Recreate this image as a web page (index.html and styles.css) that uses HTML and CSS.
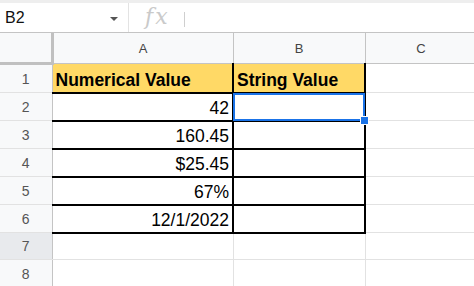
FILE: index.html
```html
<!DOCTYPE html>
<html lang="en">
<head>
    <meta charset="UTF-8">
    <meta name="viewport" content="width=device-width, initial-scale=1.0">
    <title>Sheet</title>
    <link rel="stylesheet" href="styles.css">
</head>
<body>
    <div class="top-strip"></div>
    <div class="formula-bar">
        <div class="name-box">
            <span class="cell-ref">B2</span>
            <span class="caret"></span>
        </div>
        <div class="fx">fx</div>
        <div class="fx-sep"></div>
    </div>

    <table class="sheet">
        <colgroup>
            <col class="col-num">
            <col class="col-a">
            <col class="col-b">
            <col class="col-c">
        </colgroup>
        <tr class="head-row">
            <th class="corner"></th>
            <th>A</th>
            <th>B</th>
            <th>C</th>
        </tr>
        <tr class="row-first">
            <td class="num">1</td>
            <td class="data title">Numerical Value</td>
            <td class="data title">String Value</td>
            <td></td>
        </tr>
        <tr>
            <td class="num">2</td>
            <td class="data val">42</td>
            <td class="data selected"><div class="sel-box"><span class="handle"></span></div></td>
            <td></td>
        </tr>
        <tr>
            <td class="num">3</td>
            <td class="data val">160.45</td>
            <td class="data"></td>
            <td></td>
        </tr>
        <tr>
            <td class="num">4</td>
            <td class="data val">$25.45</td>
            <td class="data"></td>
            <td></td>
        </tr>
        <tr>
            <td class="num">5</td>
            <td class="data val">67%</td>
            <td class="data"></td>
            <td></td>
        </tr>
        <tr>
            <td class="num">6</td>
            <td class="data val">12/1/2022</td>
            <td class="data"></td>
            <td></td>
        </tr>
        <tr class="short">
            <td class="num hover">7</td>
            <td></td>
            <td></td>
            <td></td>
        </tr>
        <tr>
            <td class="num">8</td>
            <td></td>
            <td></td>
            <td></td>
        </tr>
    </table>
</body>
</html>
```

FILE: styles.css
```css
body {
    margin: 0;
    background: #fff;
    font-family: "Liberation Sans", Arial, sans-serif;
    color: #000;
    overflow: hidden;
}
.top-strip {
    height: 3px;
    background: #eeeeee;
}
.formula-bar {
    height: 29px;
    display: flex;
    align-items: center;
    border-bottom: 1px solid #c4c4c4;
}
.name-box {
    width: 129px;
    height: 100%;
    display: flex;
    align-items: center;
    border-right: 1px solid #e3e3e3;
    box-sizing: border-box;
}
.cell-ref {
    font-size: 16px;
    padding-left: 5px;
    flex: 1;
    color: #111;
}
.caret {
    width: 0;
    height: 0;
    border-left: 4px solid transparent;
    border-right: 4px solid transparent;
    border-top: 4px solid #555;
    margin-right: 10px;
    margin-top: 2px;
}
.fx {
    font-family: "DejaVu Serif", "Liberation Serif", serif;
    font-style: italic;
    font-size: 22px;
    color: #cacaca;
    margin-left: 16px;
    width: 39px;
    letter-spacing: 2px;
    margin-top: -3px;
}
.fx-sep {
    width: 1px;
    height: 15px;
    background: #cfcfcf;
    margin-top: 4px;
}
.sheet {
    border-collapse: collapse;
    table-layout: fixed;
    width: 477px;
}
.col-num { width: 52px; }
.col-a { width: 181px; }
.col-b { width: 132px; }
.col-c { width: 112px; }
.sheet th,
.sheet td {
    padding: 0;
    border: 1px solid #e2e2e2;
}
.sheet td:first-child {
    border-left: none;
}
.head-row th {
    height: 29px;
    background: #f8f9fa;
    border: 1px solid #c4c4c4;
    border-top: none;
    font-weight: normal;
    font-size: 13px;
    color: #444;
    vertical-align: middle;
}
.head-row th.corner {
    border-right: 3px solid #c0c0c0;
    border-bottom: 3px solid #c0c0c0;
    border-left: none;
}
.sheet tr {
    height: 28px;
}
.sheet tr.row-first {
    height: 29px;
}
.sheet tr.short {
    height: 27px;
}
.num {
    background: #f8f9fa;
    text-align: center;
    font-size: 14px;
    color: #555;
    border-right: 1px solid #c4c4c4 !important;
    border-color: #dadce0;
}
.num.hover {
    background: #e8eaed;
}
.data {
    border-right: 2px solid #000 !important;
    border-bottom: 2px solid #000 !important;
    font-size: 17.5px;
    line-height: 20px;
    vertical-align: bottom;
    padding: 0 3px 2px !important;
    white-space: nowrap;
}
.title {
    background: #ffd966;
    font-weight: bold;
    text-align: left;
}
.val {
    text-align: right;
}
.selected {
    position: relative;
}
.sel-box {
    position: absolute;
    left: -1px;
    top: -1px;
    right: -1px;
    bottom: -1px;
    border: 2px solid #1a73e8;
}
.handle {
    position: absolute;
    right: -6px;
    bottom: -6px;
    width: 7px;
    height: 7px;
    background: #1a73e8;
    border: 1px solid #fff;
}
```
